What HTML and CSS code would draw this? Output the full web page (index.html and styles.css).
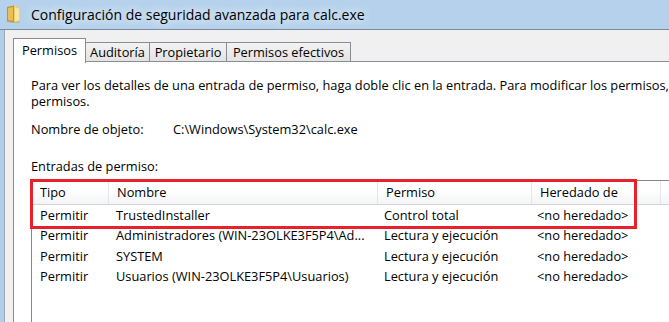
FILE: index.html
```html
<!DOCTYPE html>
<html lang="es">
<head>
    <meta charset="UTF-8">
    <title>Configuración de seguridad avanzada para calc.exe</title>
    <link rel="stylesheet" href="styles.css">
</head>
<body>
    <div class="window">
        <div class="titlebar">
            <svg class="folder-icon" width="15" height="18" viewBox="0 0 15 18">
                <path d="M1 2 L8 0.5 L8 17.5 L1 16 Z" fill="#c29332"/>
                <path d="M2 3 L7 2 L7 16 L2 15 Z" fill="#e9be55"/>
                <path d="M8 0.5 L14 2.5 L14 16.5 L8 17.5 Z" fill="#f2d06f"/>
                <path d="M9 2.5 L13 3.8 L13 15 L9 15.8 Z" fill="#f9e6a4"/>
                <path d="M1 16 L8 17.5 L14 16.5 L14 17.5 L8 18 L1 17 Z" fill="#9a8a6a" opacity="0.5"/>
            </svg>
            <span class="title">Configuración de seguridad avanzada para calc.exe</span>
        </div>
        <div class="frame">
            <div class="frame-edge"></div>
            <div class="dialog">
                <div class="tabs">
                    <div class="tab active">Permisos</div>
                    <div class="tab tab-audit">Auditoría</div>
                    <div class="tab tab-owner">Propietario</div>
                    <div class="tab tab-effective">Permisos efectivos</div>
                    <div class="tab-fill"></div>
                </div>
                <div class="page">
                    <p class="intro">Para ver los detalles de una entrada de permiso, haga doble clic en la entrada. Para modificar los permisos, haga clic en Cambiar permisos.</p>
                    <div class="object-row">
                        <span class="object-label">Nombre de objeto:</span>
                        <span>C:\Windows\System32\calc.exe</span>
                    </div>
                    <p class="entries-label">Entradas de permiso:</p>
                    <div class="listview">
                        <div class="lv-row lv-header">
                            <div class="col col-type">Tipo</div>
                            <div class="col col-name">Nombre</div>
                            <div class="col col-perm">Permiso</div>
                            <div class="col col-inh">Heredado de</div>
                        </div>
                        <div class="lv-row">
                            <div class="col col-type">Permitir</div>
                            <div class="col col-name">TrustedInstaller</div>
                            <div class="col col-perm">Control total</div>
                            <div class="col col-inh">&lt;no heredado&gt;</div>
                        </div>
                        <div class="lv-row">
                            <div class="col col-type">Permitir</div>
                            <div class="col col-name">Administradores (WIN-23OLKE3F5P4\Ad...</div>
                            <div class="col col-perm">Lectura y ejecución</div>
                            <div class="col col-inh">&lt;no heredado&gt;</div>
                        </div>
                        <div class="lv-row">
                            <div class="col col-type">Permitir</div>
                            <div class="col col-name">SYSTEM</div>
                            <div class="col col-perm">Lectura y ejecución</div>
                            <div class="col col-inh">&lt;no heredado&gt;</div>
                        </div>
                        <div class="lv-row">
                            <div class="col col-type">Permitir</div>
                            <div class="col col-name">Usuarios (WIN-23OLKE3F5P4\Usuarios)</div>
                            <div class="col col-perm">Lectura y ejecución</div>
                            <div class="col col-inh">&lt;no heredado&gt;</div>
                        </div>
                        <div class="highlight"></div>
                    </div>
                </div>
            </div>
        </div>
    </div>
</body>
</html>
```

FILE: styles.css
```css
:root {
    --title-blue: #b5d1ec;
    --tab-border: #898c95;
    --highlight-red: #e8212d;
}

body {
    margin: 0;
    font-family: "Open Sans", "Noto Sans", sans-serif;
    font-size: 12.8px;
    color: #000;
    background: #f0f0f0;
    overflow: hidden;
}

.window {
    width: 669px;
    height: 322px;
    display: flex;
    flex-direction: column;
    overflow: hidden;
}

.titlebar {
    height: 29px;
    background: var(--title-blue);
    border-bottom: 1px solid #7b8a9a;
    display: flex;
    align-items: center;
    padding-left: 6px;
    flex-shrink: 0;
}

.folder-icon {
    margin-right: 10px;
    margin-top: -1px;
}

.title {
    font-size: 14px;
    color: #000;
    text-shadow: 0 0 8px #e8f2fb, 0 0 12px #e8f2fb;
}

.frame {
    flex: 1;
    display: flex;
    min-height: 0;
}

.frame-edge {
    width: 4px;
    background: #b0cdea;
    border-right: 1px solid #a3a9b1;
}

.dialog {
    flex: 1;
    padding: 8px 0 0 8px;
    display: flex;
    flex-direction: column;
    min-width: 0;
    min-height: 0;
}

.tabs {
    display: flex;
    align-items: flex-end;
    height: 24px;
    flex-shrink: 0;
}

.tab {
    line-height: 19px;
    text-align: center;
    border: 1px solid var(--tab-border);
    border-left: none;
    background: linear-gradient(#f3f3f3, #e3e3e3);
    box-sizing: border-box;
    height: 20px;
}

.tab.active {
    width: 73px;
    height: 25px;
    line-height: 22px;
    background: #fff;
    border-left: 1px solid var(--tab-border);
    border-bottom: none;
    margin-bottom: -1px;
    position: relative;
}

.tab-audit {
    width: 64px;
}

.tab-owner {
    width: 77px;
}

.tab-effective {
    width: 124px;
}

.tab-fill {
    flex: 1;
    border-bottom: 1px solid var(--tab-border);
}

.page {
    flex: 1;
    display: flex;
    flex-direction: column;
    min-height: 0;
    overflow: hidden;
    background: #fff;
    border-left: 1px solid var(--tab-border);
    padding: 15px 0 0 17px;
    white-space: nowrap;
}

.intro {
    margin: 0;
    white-space: normal;
    width: 790px;
    flex-shrink: 0;
    line-height: 16px;
}

.object-row {
    margin-top: 11px;
    display: flex;
}

.object-label {
    width: 142px;
}

.entries-label {
    margin: 19px 0 0;
}

.listview {
    position: relative;
    flex: 1;
    margin-top: 5px;
    background: #fff;
    border-left: 1px solid #828790;
    border-top: 1px solid #828790;
}

.lv-row {
    display: flex;
    height: 20.4px;
    line-height: 20px;
}

.lv-header {
    height: 24px;
    line-height: 22px;
    background: linear-gradient(#fff 40%, #f3f4f6);
    border-bottom: 1px solid #d5d5d5;
    box-sizing: border-box;
}

.col {
    padding-left: 8px;
    overflow: hidden;
}

.lv-header .col {
    border-right: 1px solid #e3e5e8;
}

.col-type {
    width: 68px;
}

.col-name {
    width: 260px;
}

.col-perm {
    width: 145px;
}

.col-inh {
    width: 120px;
}

.highlight {
    position: absolute;
    left: -2px;
    top: -2px;
    width: 601px;
    height: 44px;
    border: 3px solid var(--highlight-red);
}
```
